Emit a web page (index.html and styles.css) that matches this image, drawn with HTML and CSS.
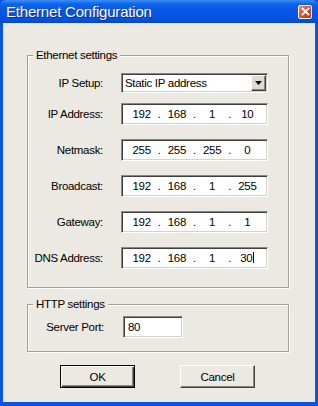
FILE: index.html
```html
<!DOCTYPE html>
<html lang="en">
<head>
  <meta charset="UTF-8" />
  <title>Ethernet Configuration</title>
  <link rel="stylesheet" href="styles.css">
</head>
<body>
  <div class="window">
    <div class="titlebar">
      <span class="title">Ethernet Configuration</span>
      <span class="close">
        <svg width="9" height="9" viewBox="0 0 9 9"><path d="M1.5 1.5 L7.5 7.5 M7.5 1.5 L1.5 7.5" stroke="#fff" stroke-width="1.8" stroke-linecap="square" fill="none"/></svg>
      </span>
    </div>

    <div class="client">
      <div class="group group-eth">
        <span class="legend">Ethernet settings</span>

        <div class="row row-select">
          <label>IP Setup:</label>
          <div class="select">
            <span class="select-text">Static IP address</span>
            <span class="drop">
              <svg width="7" height="4" viewBox="0 0 7 4"><path d="M0 0 H7 L3.5 4 Z" fill="#000"/></svg>
            </span>
          </div>
        </div>

        <div class="row">
          <label>IP Address:</label>
          <div class="field ip">
            <span class="oct">192</span><span class="dot">.</span><span class="oct">168</span><span class="dot">.</span><span class="oct">1</span><span class="dot">.</span><span class="oct">10</span>
          </div>
        </div>

        <div class="row">
          <label>Netmask:</label>
          <div class="field ip">
            <span class="oct">255</span><span class="dot">.</span><span class="oct">255</span><span class="dot">.</span><span class="oct">255</span><span class="dot">.</span><span class="oct">0</span>
          </div>
        </div>

        <div class="row">
          <label>Broadcast:</label>
          <div class="field ip">
            <span class="oct">192</span><span class="dot">.</span><span class="oct">168</span><span class="dot">.</span><span class="oct">1</span><span class="dot">.</span><span class="oct">255</span>
          </div>
        </div>

        <div class="row">
          <label>Gateway:</label>
          <div class="field ip">
            <span class="oct">192</span><span class="dot">.</span><span class="oct">168</span><span class="dot">.</span><span class="oct">1</span><span class="dot">.</span><span class="oct">1</span>
          </div>
        </div>

        <div class="row">
          <label>DNS Address:</label>
          <div class="field ip">
            <span class="oct">192</span><span class="dot">.</span><span class="oct">168</span><span class="dot">.</span><span class="oct">1</span><span class="dot">.</span><span class="oct">30<span class="caret"></span></span>
          </div>
        </div>
      </div>

      <div class="group group-http">
        <span class="legend">HTTP settings</span>
        <div class="row row-port">
          <label>Server Port:</label>
          <div class="field port">80</div>
        </div>
      </div>

      <div class="buttons">
        <button class="btn btn-default">OK</button>
        <button class="btn">Cancel</button>
      </div>
    </div>
  </div>
</body>
</html>
```

FILE: styles.css
```css
* { box-sizing: border-box; }

body {
  margin: 0;
  background: #ece9e2;
  font-family: "Liberation Sans", Arial, sans-serif;
  font-size: 11.5px;
  letter-spacing: -0.3px;
  color: #000;
}

.window {
  width: 318px;
  height: 406px;
  background: #0a55e2;
  padding: 0 3px 4px 3px;
  display: flex;
  flex-direction: column;
}

.titlebar {
  height: 23px;
  margin: 0 -3px;
  padding: 0 6px;
  display: flex;
  align-items: center;
  justify-content: space-between;
  background: linear-gradient(to bottom, #3d8ef5 0%, #0c63ea 18%, #0656e4 50%, #0552dd 85%, #0447c6 100%);
  border-radius: 6px 6px 0 0;
}

.title {
  font-size: 15px;
  letter-spacing: -0.2px;
  color: #fff;
  text-shadow: 1px 1px 0 #0a2f8a;
}

.close {
  width: 14px;
  height: 14px;
  display: flex;
  align-items: center;
  justify-content: center;
  border: 1px solid #fff;
  border-radius: 2px;
  background: linear-gradient(to bottom right, #e8866a, #cf4a26 60%, #b8391a);
}

.client {
  flex: 1;
  background: #ece9e2;
  padding: 32px 0 0 24px;
}

.group {
  position: relative;
  width: 262px;
  border: 1px solid #a3a09b;
  box-shadow: inset 1px 1px 0 #fff, 1px 1px 0 #fff;
}

.legend {
  position: absolute;
  top: -8px;
  left: 5px;
  padding: 0 3px;
  background: #ece9e2;
  line-height: 15px;
  white-space: nowrap;
}

.group-eth {
  padding: 17px 0 18px 0;
}

.group-http {
  margin-top: 16px;
  padding: 11px 0 13px 0;
}

.row {
  display: flex;
  align-items: center;
  height: 22px;
  margin-top: 14px;
}

.row-select {
  height: 20px;
  margin-top: 0;
}

.row-select + .row {
  margin-top: 10px;
}

.row label {
  width: 75px;
  text-align: right;
  margin-right: 18px;
  white-space: nowrap;
}

.row-port {
  margin-top: 0;
}

.row-port label {
  width: 76px;
  margin-right: 19px;
}

.field, .select {
  height: 22px;
  background: #fff;
  border-top: 1px solid #8a8781;
  border-left: 1px solid #8a8781;
  border-right: 1px solid #fff;
  border-bottom: 1px solid #fff;
  box-shadow: inset 1px 1px 0 #3f3f3f, inset -1px -1px 0 #d6d2ca;
}

.select {
  width: 147px;
  height: 20px;
  display: flex;
  align-items: center;
  justify-content: space-between;
  padding: 2px 1px 2px 3px;
}

.drop {
  width: 15px;
  height: 16px;
  display: flex;
  align-items: center;
  justify-content: center;
  background: #dedad4;
  border-top: 1px solid #fff;
  border-left: 1px solid #fff;
  border-right: 1px solid #404040;
  border-bottom: 1px solid #404040;
  box-shadow: inset -1px -1px 0 #8a8781;
}

.ip {
  width: 147px;
  display: flex;
  align-items: center;
  padding: 0 2px;
}

.oct {
  width: 36px;
  text-align: center;
  line-height: 16px;
}

.dot {
  width: 0;
  display: flex;
  justify-content: center;
  line-height: 16px;
}

.caret {
  display: inline-block;
  width: 1px;
  height: 11px;
  background: #000;
  vertical-align: -1px;
  margin-left: 1px;
}

.port {
  width: 60px;
  padding: 2px 0 0 4px;
  line-height: 16px;
}

.buttons {
  display: flex;
  gap: 45px;
  margin-top: 13px;
  padding-left: 33px;
}

.btn {
  width: 75px;
  height: 23px;
  padding: 0;
  font: inherit;
  letter-spacing: inherit;
  background: #ece9e2;
  border-top: 1px solid #fff;
  border-left: 1px solid #fff;
  border-right: 1px solid #404040;
  border-bottom: 1px solid #404040;
  box-shadow: inset -1px -1px 0 #8a8781;
}

.btn-default {
  border: 1px solid #000;
  box-shadow: inset 1px 1px 0 #fff, inset -1px -1px 0 #404040, inset -2px -2px 0 #8a8781;
}
```
